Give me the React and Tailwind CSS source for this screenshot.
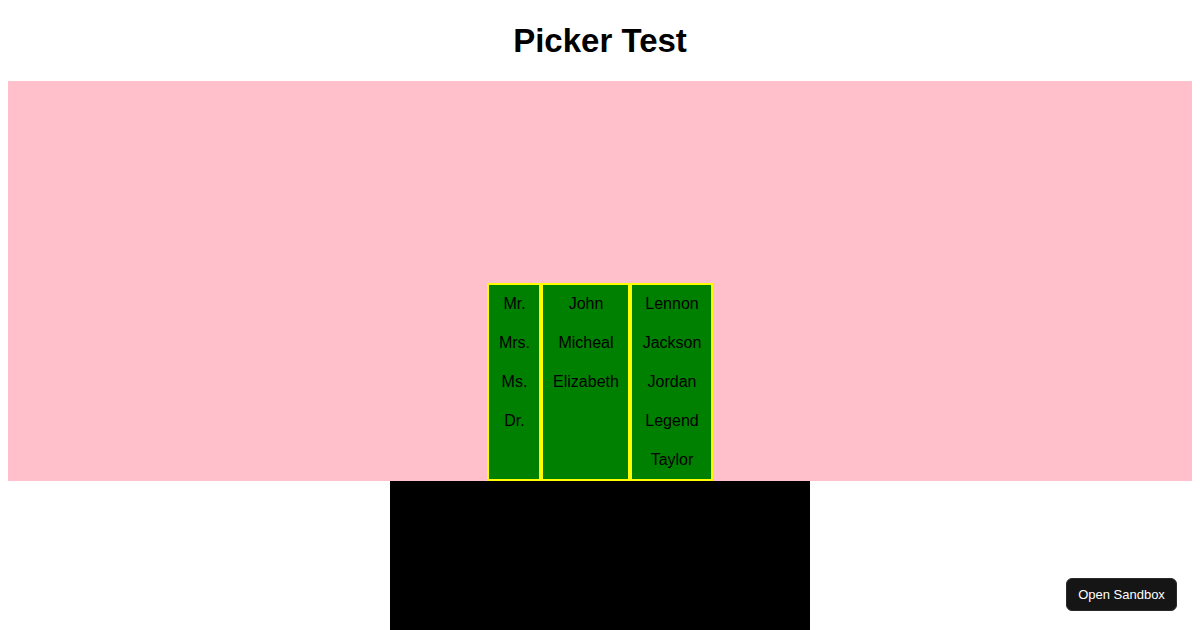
const titles = ["Mr.", "Mrs.", "Ms.", "Dr."];
const firstNames = ["John", "Micheal", "Elizabeth"];
const lastNames = ["Lennon", "Jackson", "Jordan", "Legend", "Taylor"];

function Column({ items, width }) {
  return (
    <div className={`${width} h-[198px] bg-[#008000] border-2 border-[#ffff00]`}>
      {items.map((it) => (
        <div key={it} className="h-[39px] flex items-center justify-center pl-px pb-[2px] text-black">
          {it}
        </div>
      ))}
    </div>
  );
}

export default function App() {
  return (
    <div className="relative h-[630px] overflow-hidden bg-white p-2 font-['Liberation_Sans',Arial,sans-serif] text-base">
      <h1 className="mt-[14px] mb-[21px] text-center text-[33px] font-bold leading-[38px] text-black">
        Picker Test
      </h1>
      <div className="h-[400px] bg-[#ffc0cb] flex items-end justify-center">
        <Column items={titles} width="w-[54px]" />
        <Column items={firstNames} width="w-[89px]" />
        <Column items={lastNames} width="w-[83px]" />
      </div>
      <div className="mx-auto w-[420px] h-[200px] bg-black" />
      <button className="absolute right-[23px] bottom-[19px] h-[33px] w-[111px] rounded-md bg-[#151515] border border-[#2a2a2a] text-[13px] text-white">
        Open Sandbox
      </button>
    </div>
  );
}
